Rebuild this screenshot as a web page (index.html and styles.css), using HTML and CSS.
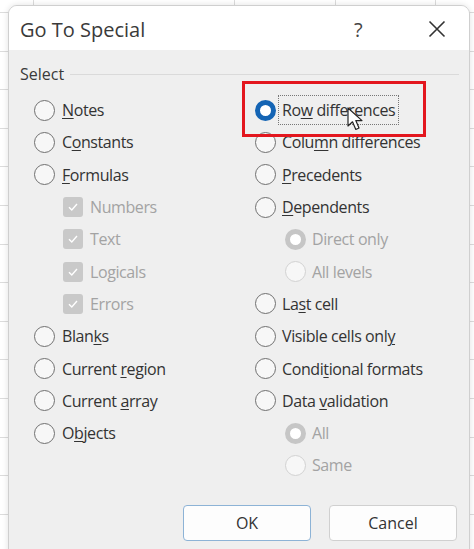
FILE: index.html
```html
<!DOCTYPE html>
<html>
<head>
<meta charset="utf-8">
<link rel="stylesheet" href="styles.css">
</head>
<body>
<div class="dialog">
  <div class="titlebar">
    <span class="title">Go To Special</span>
    <span class="help">?</span>
    <svg class="close" width="18" height="18" viewBox="0 0 18 18"><path d="M1.5 1.5 L16.5 16.5 M16.5 1.5 L1.5 16.5" stroke="#333" stroke-width="1.6" fill="none"/></svg>
  </div>
  <div class="body">
    <div class="group-head"><span class="group-label">Select</span><span class="group-line"></span></div>
    <div class="cols">
      <div class="col col-left">
        <div class="row"><span class="radio"></span><span class="lbl"><u>N</u>otes</span></div>
        <div class="row"><span class="radio"></span><span class="lbl">C<u>o</u>nstants</span></div>
        <div class="row"><span class="radio"></span><span class="lbl"><u>F</u>ormulas</span></div>
        <div class="row sub"><span class="check"><svg width="14" height="14" viewBox="0 0 14 14"><path d="M3 7.2 L5.8 10 L11 4" stroke="#fff" stroke-width="1.4" fill="none"/></svg></span><span class="lbl dis">Numbers</span></div>
        <div class="row sub"><span class="check"><svg width="14" height="14" viewBox="0 0 14 14"><path d="M3 7.2 L5.8 10 L11 4" stroke="#fff" stroke-width="1.4" fill="none"/></svg></span><span class="lbl dis">Text</span></div>
        <div class="row sub"><span class="check"><svg width="14" height="14" viewBox="0 0 14 14"><path d="M3 7.2 L5.8 10 L11 4" stroke="#fff" stroke-width="1.4" fill="none"/></svg></span><span class="lbl dis">Logicals</span></div>
        <div class="row sub"><span class="check"><svg width="14" height="14" viewBox="0 0 14 14"><path d="M3 7.2 L5.8 10 L11 4" stroke="#fff" stroke-width="1.4" fill="none"/></svg></span><span class="lbl dis">Errors</span></div>
        <div class="row"><span class="radio"></span><span class="lbl">Blan<u>k</u>s</span></div>
        <div class="row"><span class="radio"></span><span class="lbl">Current <u>r</u>egion</span></div>
        <div class="row"><span class="radio"></span><span class="lbl">Current <u>a</u>rray</span></div>
        <div class="row"><span class="radio"></span><span class="lbl">O<u>b</u>jects</span></div>
      </div>
      <div class="col col-right">
        <div class="row"><span class="radio on"></span><span class="lbl focus">Ro<u>w</u> differences</span></div>
        <div class="row"><span class="radio"></span><span class="lbl">Colu<u>m</u>n differences</span></div>
        <div class="row"><span class="radio"></span><span class="lbl"><u>P</u>recedents</span></div>
        <div class="row"><span class="radio"></span><span class="lbl"><u>D</u>ependents</span></div>
        <div class="row sub"><span class="radio dis-on"></span><span class="lbl dis">Direct only</span></div>
        <div class="row sub"><span class="radio dis-off"></span><span class="lbl dis">All levels</span></div>
        <div class="row"><span class="radio"></span><span class="lbl">La<u>s</u>t cell</span></div>
        <div class="row"><span class="radio"></span><span class="lbl">Visible cells onl<u>y</u></span></div>
        <div class="row"><span class="radio"></span><span class="lbl">Condi<u>t</u>ional formats</span></div>
        <div class="row"><span class="radio"></span><span class="lbl">Data <u>v</u>alidation</span></div>
        <div class="row sub"><span class="radio dis-on"></span><span class="lbl dis">All</span></div>
        <div class="row sub"><span class="radio dis-off"></span><span class="lbl dis">Same</span></div>
      </div>
    </div>
    <div class="buttons">
      <button class="btn default">OK</button>
      <button class="btn">Cancel</button>
    </div>
  </div>
  <div class="highlight"></div>
  <svg class="cursor" width="20" height="26" viewBox="0 0 20 26"><path d="M1 1 L1 19 L5.5 14.8 L8.8 22.5 L12 21 L8.8 13.6 L15 13.6 Z" fill="#fff" stroke="#222" stroke-width="1.2" stroke-linejoin="round"/></svg>
</div>
</body>
</html>
```

FILE: styles.css
```css
html, body {
  margin: 0;
  padding: 0;
}
body {
  width: 474px;
  height: 549px;
  overflow: hidden;
  font-family: "Open Sans", "Noto Sans", sans-serif;
  color: #333;
  background-color: #fff;
  background-image:
    repeating-linear-gradient(to right, transparent 0, transparent 33px, #dcdcdc 33px, #dcdcdc 34px, transparent 34px, transparent 100.5px),
    repeating-linear-gradient(to bottom, transparent 0, transparent 12px, #dcdcdc 12px, #dcdcdc 13px, transparent 13px, transparent 38.6px);
  padding-top: 5px;
}
.dialog {
  position: relative;
  margin-left: 8px;
  width: 460px;
  height: 560px;
  border: 1px solid #cfcfcf;
  border-radius: 9px 9px 0 0;
  background: #efefef;
  box-shadow: 0 0 6px rgba(0,0,0,0.12);
  overflow: hidden;
}
.titlebar {
  height: 44px;
  background: #fff;
  display: flex;
  align-items: center;
  padding-left: 11px;
}
.title {
  font-size: 20px;
  color: #3a3a3a;
  flex: 1;
  margin-top: 2px;
}
.help {
  font-size: 20px;
  color: #444;
  width: 20px;
  margin-right: 54px;
  margin-top: 2px;
}
.close {
  margin-right: 23px;
  margin-top: 2px;
}
.body {
  padding: 13px 0 0 0;
}
.group-head {
  display: flex;
  align-items: center;
  padding-left: 11px;
  padding-right: 10px;
  height: 22px;
}
.group-label {
  font-size: 16px;
  color: #3a3a3a;
  margin-right: 6px;
}
.group-line {
  flex: 1;
  height: 1px;
  background: #dadada;
}
.cols {
  display: grid;
  grid-template-columns: 221px 1fr;
  padding-left: 25px;
  margin-top: 9px;
}
.row {
  height: 32.3px;
  display: flex;
  align-items: center;
  font-size: 16px;
}
.row.sub {
  padding-left: 30px;
}
.radio {
  box-sizing: border-box;
  width: 21px;
  height: 21px;
  border-radius: 50%;
  border: 1.3px solid #707070;
  background: #f7f7f7;
  margin-right: 7px;
  flex: none;
}
.col-right .radio {
  margin-right: 6px;
}
.radio.on {
  border: 5.5px solid #1464b4;
  background: #fff;
}
.radio.dis-on {
  border: 5.5px solid #c6c6c6;
  background: #fff;
}
.radio.dis-off {
  border: 1.3px solid #d2d2d2;
  background: #f7f7f7;
}
.check {
  box-sizing: border-box;
  width: 20px;
  height: 20px;
  border-radius: 3px;
  background: #c9c9c9;
  margin-right: 7px;
  display: flex;
  align-items: center;
  justify-content: center;
  flex: none;
}
.col-left .row.sub {
  padding-left: 29px;
}
.lbl {
  white-space: nowrap;
  letter-spacing: -0.4px;
}
.lbl u {
  text-decoration-thickness: 1px;
  text-underline-offset: 2px;
}
.lbl.dis {
  color: #a3a3a3;
}
.lbl.focus {
  outline: 1px dotted #777;
  outline-offset: 3px;
}
.buttons {
  display: flex;
  justify-content: flex-end;
  gap: 18px;
  padding-right: 12px;
  margin-top: 23px;
}
.btn {
  width: 128px;
  height: 36px;
  border: 1px solid #d0d0d0;
  border-radius: 4px;
  background: #fdfdfd;
  font-family: "Open Sans", "Noto Sans", sans-serif;
  font-size: 16px;
  color: #333;
}
.btn.default {
  border: 1.5px solid #8db3d6;
}
.highlight {
  position: absolute;
  left: 233px;
  top: 75px;
  width: 178px;
  height: 50px;
  border: 3px solid #e3161e;
}
.cursor {
  position: absolute;
  left: 338px;
  top: 101px;
}
```
